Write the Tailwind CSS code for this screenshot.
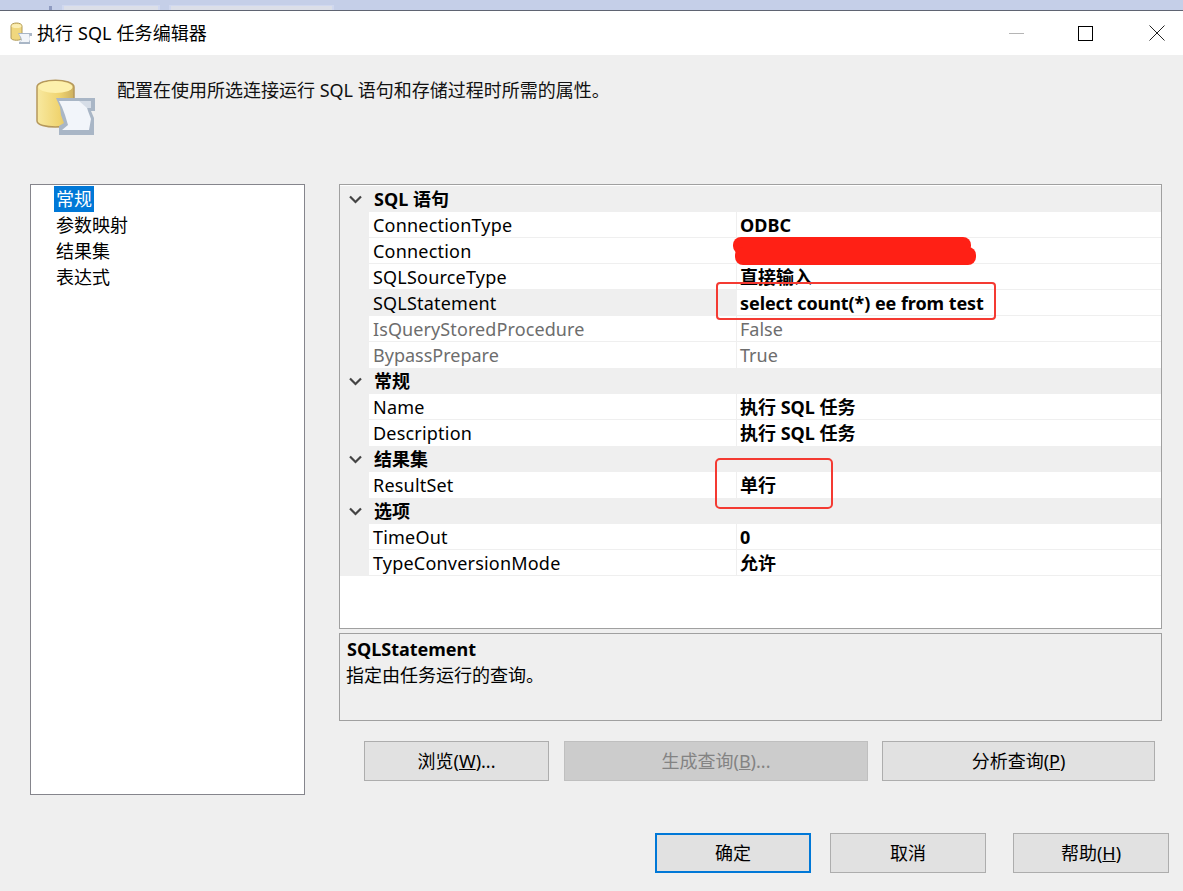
<!DOCTYPE html>
<html lang="zh-CN">
<head>
    <meta charset="UTF-8">
    <title>执行 SQL 任务编辑器</title>
    <script src="https://cdn.jsdelivr.net/npm/@tailwindcss/browser@4"></script>
</head>
<body class="bg-[#efefef]">
<div class="relative w-[1183px] h-[891px] overflow-hidden flex flex-col bg-[#efefef] text-[18px] leading-[26px] text-black font-['Noto_Sans','Noto_Sans_CJK_SC',sans-serif]">

    <!-- window behind -->
    <div class="h-[11px] shrink-0 bg-[#c5cfe8] border-b border-[#5f6472] flex">
        <div class="ml-[49px] mt-[6px] w-[3px] h-[4px] bg-[#8f9bc0]"></div>
        <div class="ml-[10px] mt-[5px] w-[98px] h-[5px] bg-[#dcdfe8] border-x-2 border-t border-[#d0d8ef]"></div>
        <div class="ml-[9px] mt-[5px] w-[165px] h-[5px] bg-[#dcdfe8] border-x-2 border-t border-[#d0d8ef]"></div>
    </div>

    <!-- title bar -->
    <div class="h-[44px] shrink-0 bg-white flex items-center pl-[10px]">
        <svg class="w-[22px] h-[22px]" viewBox="0 0 22 22">
            <path d="M1 4c0-4 11-4 11 0v12c0 3-11 3-11 0z" fill="#f0d77e" stroke="#b09a5a"/>
            <ellipse cx="6.500" cy="4" rx="5" ry="2" fill="#fbeeb4"/>
            <path d="M8 11h14v3h-2v8H9v-2l2-1-1-4z" fill="#a9b6c6"/>
            <path d="M9 12h10l1 5-1 3H10l2-2-1-3z" fill="#f2f5f9"/>
        </svg>
        <div class="ml-[5px] text-[18px] tracking-[0.1px]">执行 SQL 任务编辑器</div>
        <div class="ml-auto flex items-center">
            <div class="w-[15px] h-px bg-[#b5b5b5] mr-[54px]"></div>
            <div class="w-[15px] h-[15px] border border-black mr-[56px]"></div>
            <svg class="w-[16px] h-[16px] mr-[18px]" viewBox="0 0 16 16"><path d="M.5.500l15 15M15.500.500l-15 15" stroke="#222" fill="none"/></svg>
        </div>
    </div>

    <!-- header -->
    <div class="h-[129px] shrink-0 flex pl-[35px] pt-[21px]">
        <svg class="w-[61px] h-[60px] shrink-0" viewBox="0 0 61 60">
            <defs>
                <linearGradient id="can" x1="0" x2="1" y1="0" y2="0">
                    <stop offset="0" stop-color="#f8e9a0"/>
                    <stop offset="0.600" stop-color="#f0d470"/>
                    <stop offset="1" stop-color="#cdb060"/>
                </linearGradient>
            </defs>
            <path d="M2 11C2 2 39 2 39 11v34c0 8-37 8-37 0z" fill="url(#can)" stroke="#b5985c" stroke-width="1.500"/>
            <ellipse cx="20.500" cy="11" rx="17" ry="6" fill="#fdf0ac"/>
            <path d="M21 22h39v13h-4l3 7v17H24v-9l5-3-3-8-1-8z" fill="#a9b6c6"/>
            <path d="M24 25h26l3 10 3 8-2 11H27l6-5-3-10-3-8z" fill="#f2f5fa"/>
            <path d="M44 25h12v7h-4z" fill="#d6dde7"/>
        </svg>
        <div class="ml-[21px] mt-[1px] text-[#111]">配置在使用所选连接运行 SQL 语句和存储过程时所需的属性。</div>
    </div>

    <!-- body -->
    <div class="flex pl-[30px] h-[611px] shrink-0">
        <div class="w-[275px] h-[611px] bg-white border border-[#85858c] pl-[25px] pt-[1px] shrink-0">
            <div class="bg-[#0078d7] text-white w-fit -ml-[2px] pl-[2px] pr-[2px]">常规</div>
            <div>参数映射</div>
            <div>结果集</div>
            <div>表达式</div>
        </div>

        <div class="ml-[34px] w-[823px] flex flex-col">
            <!-- property grid -->
            <div class="h-[445px] bg-white border border-[#a0a0a0] pt-px">
                <div class="flex h-[26px] bg-[#efefef] font-bold items-center">
                    <svg class="w-[13px] h-[9px] ml-[9px] mr-[12px]" viewBox="0 0 13 9"><path d="M1 1.500l5.500 5.500L12 1.500" stroke="#444" stroke-width="2.200" fill="none"/></svg>
                    <span>SQL 语句</span>
                </div>
                <div class="flex h-[26px] border-b border-[#efefef]"><div class="w-[29px] bg-[#efefef]"></div><div class="w-[368px] pl-[4px] tracking-[0.2px] border-r border-[#efefef]">ConnectionType</div><div class="pl-[3px] font-bold">ODBC</div></div>
                <div class="flex h-[26px] border-b border-[#efefef]"><div class="w-[29px] bg-[#efefef]"></div><div class="w-[368px] pl-[4px] tracking-[0.2px] border-r border-[#efefef]">Connection</div><div class="pl-[3px] font-bold"></div></div>
                <div class="flex h-[26px] border-b border-[#efefef]"><div class="w-[29px] bg-[#efefef]"></div><div class="w-[368px] pl-[4px] tracking-[0.2px] border-r border-[#efefef]">SQLSourceType</div><div class="pl-[3px] font-bold">直接输入</div></div>
                <div class="flex h-[26px] border-b border-[#efefef]"><div class="w-[29px] bg-[#efefef]"></div><div class="w-[368px] pl-[4px] tracking-[0.2px] bg-[#efefef]">SQLStatement</div><div class="pl-[3px] font-bold tracking-[-0.07px]">select count(*) ee from test</div></div>
                <div class="flex h-[26px] border-b border-[#efefef] text-[#6d6d6d]"><div class="w-[29px] bg-[#efefef]"></div><div class="w-[368px] pl-[4px] tracking-[0.1px] border-r border-[#efefef]">IsQueryStoredProcedure</div><div class="pl-[3px]">False</div></div>
                <div class="flex h-[26px] text-[#6d6d6d]"><div class="w-[29px] bg-[#efefef]"></div><div class="w-[368px] pl-[4px] border-r border-[#efefef]">BypassPrepare</div><div class="pl-[3px]">True</div></div>
                <div class="flex h-[26px] bg-[#efefef] font-bold items-center">
                    <svg class="w-[13px] h-[9px] ml-[9px] mr-[12px]" viewBox="0 0 13 9"><path d="M1 1.500l5.500 5.500L12 1.500" stroke="#444" stroke-width="2.200" fill="none"/></svg>
                    <span>常规</span>
                </div>
                <div class="flex h-[26px] border-b border-[#efefef]"><div class="w-[29px] bg-[#efefef]"></div><div class="w-[368px] pl-[4px] tracking-[0.2px] border-r border-[#efefef]">Name</div><div class="pl-[3px] font-bold">执行 SQL 任务</div></div>
                <div class="flex h-[26px]"><div class="w-[29px] bg-[#efefef]"></div><div class="w-[368px] pl-[4px] tracking-[0.2px] border-r border-[#efefef]">Description</div><div class="pl-[3px] font-bold">执行 SQL 任务</div></div>
                <div class="flex h-[26px] bg-[#efefef] font-bold items-center">
                    <svg class="w-[13px] h-[9px] ml-[9px] mr-[12px]" viewBox="0 0 13 9"><path d="M1 1.500l5.500 5.500L12 1.500" stroke="#444" stroke-width="2.200" fill="none"/></svg>
                    <span>结果集</span>
                </div>
                <div class="flex h-[26px]"><div class="w-[29px] bg-[#efefef]"></div><div class="w-[368px] pl-[4px] tracking-[0.2px] border-r border-[#efefef]">ResultSet</div><div class="pl-[3px] font-bold">单行</div></div>
                <div class="flex h-[26px] bg-[#efefef] font-bold items-center">
                    <svg class="w-[13px] h-[9px] ml-[9px] mr-[12px]" viewBox="0 0 13 9"><path d="M1 1.500l5.500 5.500L12 1.500" stroke="#444" stroke-width="2.200" fill="none"/></svg>
                    <span>选项</span>
                </div>
                <div class="flex h-[26px] border-b border-[#efefef]"><div class="w-[29px] bg-[#efefef]"></div><div class="w-[368px] pl-[4px] tracking-[0.2px] border-r border-[#efefef]">TimeOut</div><div class="pl-[3px] font-bold">0</div></div>
                <div class="flex h-[26px] border-b border-[#efefef]"><div class="w-[29px] bg-[#efefef]"></div><div class="w-[368px] pl-[4px] tracking-[0.2px] border-r border-[#efefef]">TypeConversionMode</div><div class="pl-[3px] font-bold">允许</div></div>
            </div>

            <!-- description -->
            <div class="mt-[4px] h-[88px] border border-[#a0a0a0] pl-[7px] pt-[2px]">
                <div class="font-bold">SQLStatement</div>
                <div class="-ml-px">指定由任务运行的查询。</div>
            </div>

            <!-- query buttons -->
            <div class="mt-[20px] flex pl-[25px]">
                <div class="w-[185px] h-[40px] flex items-center justify-center bg-[#e1e1e1] border border-[#adadad]"><span>浏览(<span class="underline">W</span>)...</span></div>
                <div class="ml-[15px] w-[304px] h-[40px] flex items-center justify-center bg-[#cccccc] border border-[#bfbfbf] text-[#838383]"><span>生成查询(<span class="underline">B</span>)...</span></div>
                <div class="ml-[14px] w-[273px] h-[40px] flex items-center justify-center bg-[#e1e1e1] border border-[#adadad]"><span>分析查询(<span class="underline">P</span>)</span></div>
            </div>
        </div>
    </div>

    <!-- footer buttons -->
    <div class="mt-[38px] flex pl-[655px]">
        <div class="w-[156px] h-[40px] flex items-center justify-center bg-[#e1e1e1] border-2 border-[#0078d7]">确定</div>
        <div class="ml-[19px] w-[156px] h-[40px] flex items-center justify-center bg-[#e1e1e1] border border-[#adadad]">取消</div>
        <div class="ml-[27px] w-[156px] h-[40px] flex items-center justify-center bg-[#e1e1e1] border border-[#adadad]"><span>帮助(<span class="underline">H</span>)</span></div>
    </div>

    <!-- red annotations drawn over the screenshot -->
    <div class="absolute left-[733px] top-[237px] w-[238px] h-[17px] bg-[#ff2015] rounded-[8px]"></div>
    <div class="absolute left-[735px] top-[247px] w-[241px] h-[18px] bg-[#ff2015] rounded-[8px]"></div>
    <div class="absolute left-[716px] top-[282px] w-[280px] h-[38px] border-2 border-[#f43a32] rounded-[4px]"></div>
    <div class="absolute left-[715px] top-[458px] w-[118px] h-[51px] border-2 border-[#f43a32] rounded-[5px]"></div>
</div>
</body>
</html>
